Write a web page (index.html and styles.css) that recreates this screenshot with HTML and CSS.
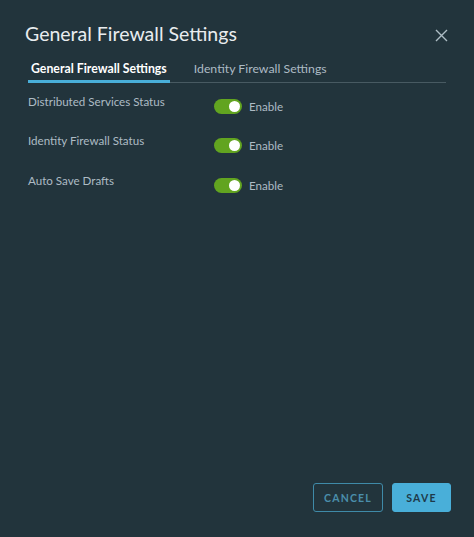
FILE: index.html
```html
<!DOCTYPE html>
<html lang="en">
<head>
    <meta charset="UTF-8">
    <meta name="viewport" content="width=device-width, initial-scale=1.0">
    <title>General Firewall Settings</title>
    <link rel="stylesheet" href="styles.css">
</head>
<body>
    <div class="modal">
        <div class="modal-header">
            <h3 class="modal-title">General Firewall Settings</h3>
            <button class="close" aria-label="Close">
                <svg width="13" height="13" viewBox="0 0 13 13">
                    <path d="M1 1 L12 12 M12 1 L1 12" stroke="#aebdc5" stroke-width="1.4" fill="none"/>
                </svg>
            </button>
        </div>

        <div class="tabs">
            <div class="tab active">General Firewall Settings</div>
            <div class="tab">Identity Firewall Settings</div>
        </div>

        <div class="settings">
            <div class="row">
                <div class="label">Distributed Services Status</div>
                <div class="toggle"><span class="switch"></span>Enable</div>
            </div>
            <div class="row">
                <div class="label">Identity Firewall Status</div>
                <div class="toggle"><span class="switch"></span>Enable</div>
            </div>
            <div class="row">
                <div class="label">Auto Save Drafts</div>
                <div class="toggle"><span class="switch"></span>Enable</div>
            </div>
        </div>

        <div class="footer">
            <button class="btn btn-outline">Cancel</button>
            <button class="btn btn-primary">Save</button>
        </div>
    </div>
</body>
</html>
```

FILE: styles.css
```css
body {
    margin: 0;
    background: #22343c;
    font-family: 'Lato', sans-serif;
    color: #adbbc4;
}

.modal {
    height: 537px;
    box-sizing: border-box;
    display: flex;
    flex-direction: column;
    padding: 0 28px 25px 28px;
}

.modal-header {
    display: flex;
    justify-content: space-between;
    align-items: center;
    padding-top: 20px;
    margin-left: -3px;
    margin-right: -5px;
}

.modal-title {
    margin: 0;
    font-size: 19.5px;
    font-weight: 400;
    color: #e9ecef;
    line-height: 28px;
}

.close {
    background: none;
    border: none;
    padding: 0;
    margin-right: 3px;
    margin-top: 2px;
    cursor: pointer;
    display: flex;
}

.tabs {
    display: flex;
    gap: 21px;
    margin-top: 13px;
    border-bottom: 1px solid #485a62;
}

.tab {
    font-size: 12.3px;
    padding: 0 3px 4px 3px;
    color: #adbbc4;
    margin-bottom: -1px;
    border-bottom: 3px solid transparent;
}

.tab.active {
    color: #ffffff;
    font-weight: 700;
    border-bottom-color: #49afd9;
}

.settings {
    flex: 1;
    padding-top: 11px;
}

.row {
    display: flex;
    height: 39.3px;
}

.label {
    width: 186px;
    font-size: 11.6px;
    line-height: 15px;
}

.toggle {
    display: flex;
    align-items: center;
    gap: 7px;
    font-size: 11.6px;
    margin-top: 5px;
    height: 15px;
}

.switch {
    position: relative;
    width: 28px;
    height: 15px;
    border-radius: 8px;
    background: #62a420;
}

.switch::after {
    content: "";
    position: absolute;
    top: 2px;
    right: 2px;
    width: 11px;
    height: 11px;
    border-radius: 50%;
    background: #ffffff;
}

.footer {
    display: flex;
    justify-content: flex-end;
    gap: 9px;
    margin-right: -5px;
}

.btn {
    height: 29px;
    box-sizing: border-box;
    padding: 0 10px;
    border-radius: 3px;
    font-family: 'Lato', sans-serif;
    font-size: 10.5px;
    font-weight: 700;
    letter-spacing: 1.2px;
    text-transform: uppercase;
    cursor: pointer;
}

.btn-outline {
    width: 70px;
    background: transparent;
    border: 1px solid #3f8aa8;
    color: #4a8eab;
}

.btn-primary {
    width: 59px;
    background: #49afd9;
    border: 1px solid #49afd9;
    color: #1e3a4a;
}
```
